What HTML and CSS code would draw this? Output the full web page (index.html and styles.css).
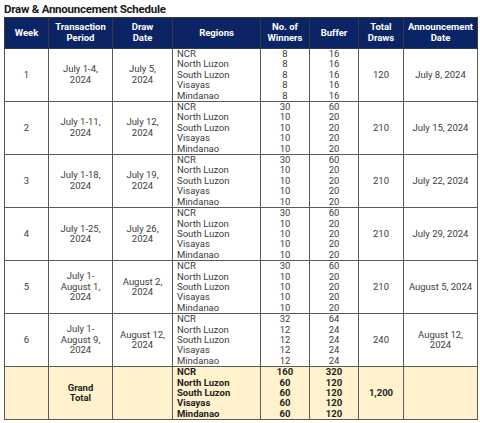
FILE: index.html
```html
<!DOCTYPE html>
<html lang="en">

<head>
    <meta charset="UTF-8">
    <title>Draw &amp; Announcement Schedule</title>
    <link rel="stylesheet" href="styles.css">
</head>

<body>
    <h1 class="title">Draw &amp; Announcement Schedule</h1>
    <table class="schedule">
        <colgroup>
            <col class="c-week">
            <col class="c-period">
            <col class="c-draw">
            <col class="c-region">
            <col class="c-win">
            <col class="c-buf">
            <col class="c-total">
            <col class="c-ann">
        </colgroup>
        <thead>
            <tr>
                <th>Week</th>
                <th>Transaction<br>Period</th>
                <th>Draw<br>Date</th>
                <th>Regions</th>
                <th>No. of<br>Winners</th>
                <th>Buffer</th>
                <th>Total<br>Draws</th>
                <th>Announcement<br>Date</th>
            </tr>
        </thead>
        <tbody>
            <tr>
                <td>1</td>
                <td>July 1-4,<br>2024</td>
                <td>July 5,<br>2024</td>
                <td class="list left">NCR<br>North Luzon<br>South Luzon<br>Visayas<br>Mindanao</td>
                <td class="list">8<br>8<br>8<br>8<br>8</td>
                <td class="list">16<br>16<br>16<br>16<br>16</td>
                <td>120</td>
                <td>July 8, 2024</td>
            </tr>
            <tr>
                <td>2</td>
                <td>July 1-11,<br>2024</td>
                <td>July 12,<br>2024</td>
                <td class="list left">NCR<br>North Luzon<br>South Luzon<br>Visayas<br>Mindanao</td>
                <td class="list">30<br>10<br>10<br>10<br>10</td>
                <td class="list">60<br>20<br>20<br>20<br>20</td>
                <td>210</td>
                <td>July 15, 2024</td>
            </tr>
            <tr>
                <td>3</td>
                <td>July 1-18,<br>2024</td>
                <td>July 19,<br>2024</td>
                <td class="list left">NCR<br>North Luzon<br>South Luzon<br>Visayas<br>Mindanao</td>
                <td class="list">30<br>10<br>10<br>10<br>10</td>
                <td class="list">60<br>20<br>20<br>20<br>20</td>
                <td>210</td>
                <td>July 22, 2024</td>
            </tr>
            <tr>
                <td>4</td>
                <td>July 1-25,<br>2024</td>
                <td>July 26,<br>2024</td>
                <td class="list left">NCR<br>North Luzon<br>South Luzon<br>Visayas<br>Mindanao</td>
                <td class="list">30<br>10<br>10<br>10<br>10</td>
                <td class="list">60<br>20<br>20<br>20<br>20</td>
                <td>210</td>
                <td>July 29, 2024</td>
            </tr>
            <tr>
                <td>5</td>
                <td>July 1-<br>August 1,<br>2024</td>
                <td>August 2,<br>2024</td>
                <td class="list left">NCR<br>North Luzon<br>South Luzon<br>Visayas<br>Mindanao</td>
                <td class="list">30<br>10<br>10<br>10<br>10</td>
                <td class="list">60<br>20<br>20<br>20<br>20</td>
                <td>210</td>
                <td>August 5, 2024</td>
            </tr>
            <tr>
                <td>6</td>
                <td>July 1-<br>August 9,<br>2024</td>
                <td>August 12,<br>2024</td>
                <td class="list left">NCR<br>North Luzon<br>South Luzon<br>Visayas<br>Mindanao</td>
                <td class="list">32<br>12<br>12<br>12<br>12</td>
                <td class="list">64<br>24<br>24<br>24<br>24</td>
                <td>240</td>
                <td>August 12,<br>2024</td>
            </tr>
            <tr class="grand">
                <td></td>
                <td>Grand<br>Total</td>
                <td></td>
                <td class="list left">NCR<br>North Luzon<br>South Luzon<br>Visayas<br>Mindanao</td>
                <td class="list">160<br>60<br>60<br>60<br>60</td>
                <td class="list">320<br>120<br>120<br>120<br>120</td>
                <td>1,200</td>
                <td></td>
            </tr>
        </tbody>
    </table>
</body>

</html>
```

FILE: styles.css
```css
body {
    margin: 0;
    padding: 3px 4px;
    background: #fff;
    font-family: Roboto, "Liberation Sans", sans-serif;
    color: #3c3c3c;
}

.title {
    margin: 0 0 2px;
    font-size: 11.5px;
    line-height: 12px;
    font-weight: 700;
    letter-spacing: -0.25px;
    color: #1a1a1a;
}

.schedule {
    width: 473px;
    border-collapse: collapse;
    table-layout: fixed;
    font-size: 9.5px;
}

.c-week { width: 44px; }
.c-period { width: 64px; }
.c-draw { width: 60px; }
.c-region { width: 88px; }
.c-win { width: 49px; }
.c-buf { width: 49px; }
.c-total { width: 45px; }
.c-ann { width: 74px; }

.schedule th {
    height: 30px;
    padding: 0 2px;
    background: #0b2466;
    color: #fff;
    font-weight: 700;
    line-height: 10.8px;
    border: 1px solid #3a3a3a;
}

.schedule td {
    height: 52px;
    padding: 0 2px;
    text-align: center;
    vertical-align: middle;
    line-height: 10.6px;
    border: 1px solid #5a5a5a;
}

.schedule td.list {
    line-height: 10.4px;
}

.schedule td.left {
    text-align: left;
    padding-left: 4px;
}

.grand td {
    background: #fff2cc;
    font-weight: 700;
    color: #1e1e1e;
}
```
